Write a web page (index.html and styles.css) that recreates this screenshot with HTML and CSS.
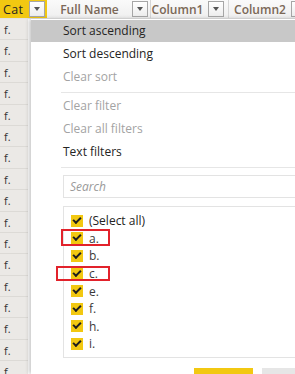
FILE: index.html
```html
<!DOCTYPE html>
<html lang="en">
<head>
<meta charset="UTF-8">
<title>Table filter</title>
<link rel="stylesheet" href="styles.css">
</head>
<body>
<div class="sheet">
  <div class="head">
    <div class="hcell cat"><span class="hlabel">Cat</span><span class="drop"></span></div>
    <div class="hcell fullname"><span class="hlabel">Full Name</span><span class="drop"></span></div>
    <div class="hcell col1"><span class="hlabel">Column1</span><span class="drop"></span></div>
    <div class="hcell col2"><span class="hlabel">Column2</span><span class="drop"></span></div>
  </div>
  <div class="rows">
    <div class="cell">f.</div><div class="cell">f.</div><div class="cell">f.</div><div class="cell">f.</div>
    <div class="cell">f.</div><div class="cell">f.</div><div class="cell">f.</div><div class="cell">f.</div>
    <div class="cell">f.</div><div class="cell">f.</div><div class="cell">f.</div><div class="cell">f.</div>
    <div class="cell">f.</div><div class="cell">f.</div><div class="cell">f.</div><div class="cell">f.</div>
    <div class="cell">f.</div>
  </div>

  <!-- filter dropdown for the Cat column -->
  <div class="menu">
    <div class="item hover">Sort ascending</div>
    <div class="item">Sort descending</div>
    <div class="item off">Clear sort</div>
    <div class="sep"></div>
    <div class="item off">Clear filter</div>
    <div class="item off">Clear all filters</div>
    <div class="item">Text filters</div>
    <div class="sep"></div>
    <div class="search">Search</div>
    <div class="list">
      <div class="opt all"><span class="box"></span>(Select all)</div>
      <div class="opt"><span class="box"></span>a.<span class="mark mark-a"></span></div>
      <div class="opt"><span class="box"></span>b.</div>
      <div class="opt"><span class="box"></span>c.<span class="mark mark-c"></span></div>
      <div class="opt"><span class="box"></span>e.</div>
      <div class="opt"><span class="box"></span>f.</div>
      <div class="opt"><span class="box"></span>h.</div>
      <div class="opt"><span class="box"></span>i.</div>
    </div>
    <div class="buttons">
      <button class="ok">OK</button>
      <button class="cancel">Cancel</button>
    </div>
  </div>
</div>
</body>
</html>
```

FILE: styles.css
```css
body{margin:0;background:#fff;font-family:"Open Sans","Noto Sans",sans-serif;font-size:12px;color:#252423;overflow:hidden;}
.sheet{position:relative;width:295px;height:374px;overflow:hidden;}

.head{display:flex;height:19px;background:linear-gradient(#fafafa,#efefef);border-bottom:1px solid #e3e3e3;box-sizing:border-box;}
.hcell{display:flex;align-items:center;flex:none;border-right:1px solid #d6d6d6;box-sizing:border-box;}
.hlabel{flex:1;text-align:center;color:#7b6857;white-space:nowrap;font-size:12px;font-weight:600;}
.cat{width:47px;background:#f2c811;border-right:none;}
.cat .hlabel{color:#252423;text-align:left;padding-left:3px;font-weight:400;font-size:12.5px;letter-spacing:0.4px;}
.fullname{width:104px;}
.col1{width:78px;}
.col1 .hlabel{padding-right:4px;}
.col2{width:80px;border-right:none;}
.drop{width:16px;height:16px;margin-right:2px;box-sizing:border-box;border:1px solid #a6a6a6;background:linear-gradient(#ffffff,#ededed);position:relative;flex:none;}
.drop::after{content:"";position:absolute;left:4px;top:5px;border-left:3px solid transparent;border-right:3px solid transparent;border-top:4px solid #555;}
.col1 .drop{margin-right:4px;}

.rows{width:28px;}
.cell{height:21.4px;line-height:21px;padding-left:4px;background:#ebe9e6;border-bottom:1px solid #dcdad6;box-sizing:border-box;font-size:11px;color:#333;}

.menu{position:absolute;left:31px;top:19px;width:290px;bottom:0;background:#fff;box-shadow:-2px 0 4px rgba(0,0,0,0.22);padding-top:1px;}
.item{height:23px;line-height:23px;padding-left:32px;color:#252423;}
.item.hover{height:22px;line-height:22px;background:#c8c8c8;}
.item.off{color:#a3a3a3;}
.sep{height:1px;background:#e6e6e6;margin:4px 0 1px 30px;}

.search{margin:7px 0 0 32px;height:23px;line-height:21px;box-sizing:border-box;border:1px solid #e3e3e3;padding-left:6px;font-style:italic;color:#9a9a9a;}
.list{margin:8px 0 0 32px;height:152px;box-sizing:border-box;border:1px solid #e3e3e3;padding:5px 0 0 7px;}
.opt{position:relative;display:flex;align-items:center;height:17.6px;color:#3b3a39;}
.opt.all{color:#252423;}
.box{width:12px;height:12px;background:#f2c811;margin-right:6px;position:relative;flex:none;}
.box::after{content:"";position:absolute;width:6px;height:3px;border-left:2.5px solid #1e1e1e;border-bottom:2.5px solid #1e1e1e;transform:rotate(-45deg);top:2px;left:2px;}
.mark{position:absolute;border:2px solid #e2222b;box-sizing:border-box;}
.mark-a{left:-10px;top:-1px;width:49px;height:17px;}
.mark-c{left:-15px;top:1px;width:54px;height:15px;}

.buttons{display:flex;gap:9px;margin:10px 0 0 163px;}
.buttons button{height:26px;width:60px;border:none;font-family:inherit;font-size:12px;padding:0;}
.ok{background:#f2c811;color:#252423;}
.cancel{background:#e6e6e6;color:#252423;}
```
